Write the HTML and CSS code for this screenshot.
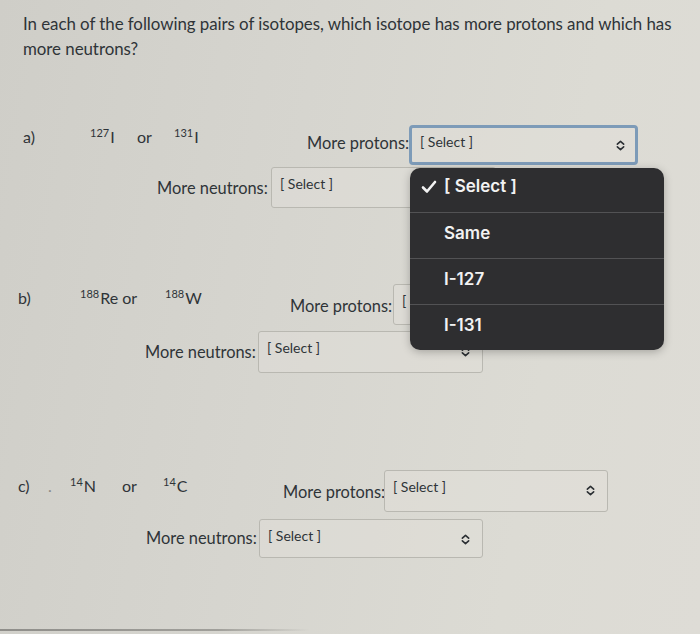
FILE: index.html
```html
<!DOCTYPE html>
<html lang="en">
<head>
<meta charset="utf-8">
<title>Isotopes</title>
<link rel="stylesheet" href="styles.css">
</head>
<body>
<div class="page">
  <p class="question">In each of the following pairs of isotopes, which isotope has more protons and which has<br>more neutrons?</p>

  <div class="row top row-a">
    <span class="cell c1">a)</span>
    <span class="cell c2 iso"><sup>127</sup>I</span>
    <span class="cell c3">or</span>
    <span class="cell c4 iso"><sup>131</sup>I</span>
    <span class="label plabel">More protons:</span>
    <span class="select focus">
      <span class="val">[ Select ]</span>
      <svg class="chev" viewBox="0 0 10 12" width="9" height="11"><path d="M1.5 4.5 L5 1.5 L8.5 4.5 M1.5 7.5 L5 10.5 L8.5 7.5" fill="none" stroke="#2b2f33" stroke-width="1.8" stroke-linecap="round" stroke-linejoin="round"/></svg>
    </span>
  </div>
  <div class="row bottom nrow-a">
    <span class="label nlabel">More neutrons:</span>
    <span class="select">
      <span class="val">[ Select ]</span>
      <svg class="chev" viewBox="0 0 10 12" width="9" height="11"><path d="M1.5 4.5 L5 1.5 L8.5 4.5 M1.5 7.5 L5 10.5 L8.5 7.5" fill="none" stroke="#2b2f33" stroke-width="1.8" stroke-linecap="round" stroke-linejoin="round"/></svg>
    </span>
  </div>

  <div class="row top row-b">
    <span class="cell c1">b)</span>
    <span class="cell c2 iso"><sup>188</sup>Re or</span>
    <span class="cell c3 iso"><sup>188</sup>W</span>
    <span class="label plabel">More protons:</span>
    <span class="select">
      <span class="val">[ Select ]</span>
      <svg class="chev" viewBox="0 0 10 12" width="9" height="11"><path d="M1.5 4.5 L5 1.5 L8.5 4.5 M1.5 7.5 L5 10.5 L8.5 7.5" fill="none" stroke="#2b2f33" stroke-width="1.8" stroke-linecap="round" stroke-linejoin="round"/></svg>
    </span>
  </div>
  <div class="row bottom nrow-b">
    <span class="label nlabel">More neutrons:</span>
    <span class="select">
      <span class="val">[ Select ]</span>
      <svg class="chev" viewBox="0 0 10 12" width="9" height="11"><path d="M1.5 4.5 L5 1.5 L8.5 4.5 M1.5 7.5 L5 10.5 L8.5 7.5" fill="none" stroke="#2b2f33" stroke-width="1.8" stroke-linecap="round" stroke-linejoin="round"/></svg>
    </span>
  </div>

  <div class="row top row-c">
    <span class="cell c1">c)</span>
    <span class="cell c2 dot">.</span>
    <span class="cell c3 iso"><sup>14</sup>N</span>
    <span class="cell c4">or</span>
    <span class="cell c5 iso"><sup>14</sup>C</span>
    <span class="label plabel">More protons:</span>
    <span class="select">
      <span class="val">[ Select ]</span>
      <svg class="chev" viewBox="0 0 10 12" width="9" height="11"><path d="M1.5 4.5 L5 1.5 L8.5 4.5 M1.5 7.5 L5 10.5 L8.5 7.5" fill="none" stroke="#2b2f33" stroke-width="1.8" stroke-linecap="round" stroke-linejoin="round"/></svg>
    </span>
  </div>
  <div class="row bottom nrow-c">
    <span class="label nlabel">More neutrons:</span>
    <span class="select">
      <span class="val">[ Select ]</span>
      <svg class="chev" viewBox="0 0 10 12" width="9" height="11"><path d="M1.5 4.5 L5 1.5 L8.5 4.5 M1.5 7.5 L5 10.5 L8.5 7.5" fill="none" stroke="#2b2f33" stroke-width="1.8" stroke-linecap="round" stroke-linejoin="round"/></svg>
    </span>
  </div>

  <div class="edge"></div>

  <ul class="menu">
    <li class="opt checked"><svg class="check" viewBox="0 0 16 14" width="16" height="14"><path d="M2 7.5 L6 11.5 L14 2" fill="none" stroke="#f2f2f2" stroke-width="2.6" stroke-linecap="round" stroke-linejoin="round"/></svg>[ Select ]</li>
    <li class="opt">Same</li>
    <li class="opt">I-127</li>
    <li class="opt">I-131</li>
  </ul>
</div>
</body>
</html>
```

FILE: styles.css
```css
html, body {
  margin: 0;
  padding: 0;
}
body {
  width: 700px;
  height: 634px;
  overflow: hidden;
  background: linear-gradient(100deg, #cfcec8 0%, #d6d5cf 40%, #dcdbd4 75%, #dedcd6 100%);
  font-family: Lato, "Open Sans", sans-serif;
  color: #2f3438;
}
.page {
  position: relative;
  height: 634px;
  padding-top: 11px;
  box-sizing: border-box;
}
.question {
  margin: 0;
  padding-left: 23px;
  font-size: 16.9px;
  line-height: 25px;
  letter-spacing: -0.05px;
}
.row {
  display: flex;
  align-items: flex-start;
  height: 40px;
  white-space: nowrap;
}
.cell {
  display: block;
  font-size: 16px;
  line-height: 20px;
  flex: none;
}
.iso sup {
  font-size: 11px;
  line-height: 0;
  vertical-align: 6px;
  margin-right: 1px;
}
.label {
  display: block;
  flex: none;
  font-size: 16.4px;
  line-height: 20px;
  white-space: nowrap;
}
.select {
  position: relative;
  display: block;
  flex: none;
  box-sizing: border-box;
  height: 40px;
  border: 1px solid #b9b8b1;
  border-radius: 3px;
  background: rgba(228, 227, 221, 0.35);
}
.select .val {
  position: absolute;
  left: 8px;
  top: 7px;
  font-size: 14px;
  line-height: 18px;
  color: #2f3438;
}
.select .chev {
  position: absolute;
  right: 12px;
  top: 14px;
}
.select.focus {
  border: 3px solid #7d9bb8;
  border-radius: 4px;
}
.select.focus .val { left: 8px; top: 5px; }
.select.focus .chev { right: 10px; top: 12px; }

/* part a */
.row-a { margin-top: 64px; padding-left: 23px; }
.row-a .cell { padding-top: 2px; }
.row-a .c1 { width: 67px; }
.row-a .c2 { width: 47px; }
.row-a .c3 { width: 37px; }
.row-a .c4 { width: 133px; }
.row-a .plabel { width: 102px; padding-top: 8px; }
.row-a .select { width: 229px; }

.nrow-a { margin-top: 2px; padding-left: 157px; height: 41px; }
.nrow-a .nlabel { width: 114px; padding-top: 11px; }
.nrow-a .select { width: 225px; height: 41px; }

/* part b */
.row-b { margin-top: 76px; padding-left: 18px; }
.row-b .cell { padding-top: 4px; }
.row-b .c1 { width: 62px; }
.row-b .c2 { width: 85px; }
.row-b .c3 { width: 125px; }
.row-b .plabel { width: 103px; padding-top: 12px; }
.row-b .select { width: 226px; height: 41px; }

.nrow-b { margin-top: 7px; padding-left: 145px; height: 42px; }
.nrow-b .nlabel { width: 113px; padding-top: 11px; }
.nrow-b .select { width: 225px; height: 42px; }

/* part c */
.row-c { margin-top: 97px; padding-left: 18px; height: 42px; }
.row-c .cell { padding-top: 6px; }
.row-c .c1 { width: 30px; }
.row-c .c2 { width: 22px; color: #8a8a86; }
.row-c .c3 { width: 52px; }
.row-c .c4 { width: 41px; }
.row-c .c5 { width: 120px; }
.row-c .plabel { width: 101px; padding-top: 12px; }
.row-c .select { width: 224px; height: 42px; }

.nrow-c { margin-top: 7px; padding-left: 146px; }
.nrow-c .nlabel { width: 113px; padding-top: 9px; }
.nrow-c .select { width: 224px; height: 39px; }

.edge {
  margin-top: 70px;
  width: 310px;
  height: 2px;
  background: linear-gradient(90deg, #8f8e8a, #a09f9a 70%, rgba(160,159,154,0));
}

/* open dropdown menu overlay */
.menu {
  position: absolute;
  left: 410px;
  top: 168px;
  width: 254px;
  margin: 0;
  padding: 0;
  list-style: none;
  background: #2e2e30;
  border-radius: 10px;
  overflow: hidden;
  box-shadow: 0 2px 8px rgba(0,0,0,0.25);
}
.opt {
  position: relative;
  height: 45px;
  line-height: 40px;
  padding-left: 34px;
  font-family: Inter, "Open Sans", sans-serif;
  font-size: 17px;
  font-weight: 600;
  color: #f2f2f2;
  border-top: 1px solid #525254;
}
.opt:first-child { border-top: none; height: 44px; line-height: 37px; }
.check {
  position: absolute;
  left: 11px;
  top: 12px;
}
```
